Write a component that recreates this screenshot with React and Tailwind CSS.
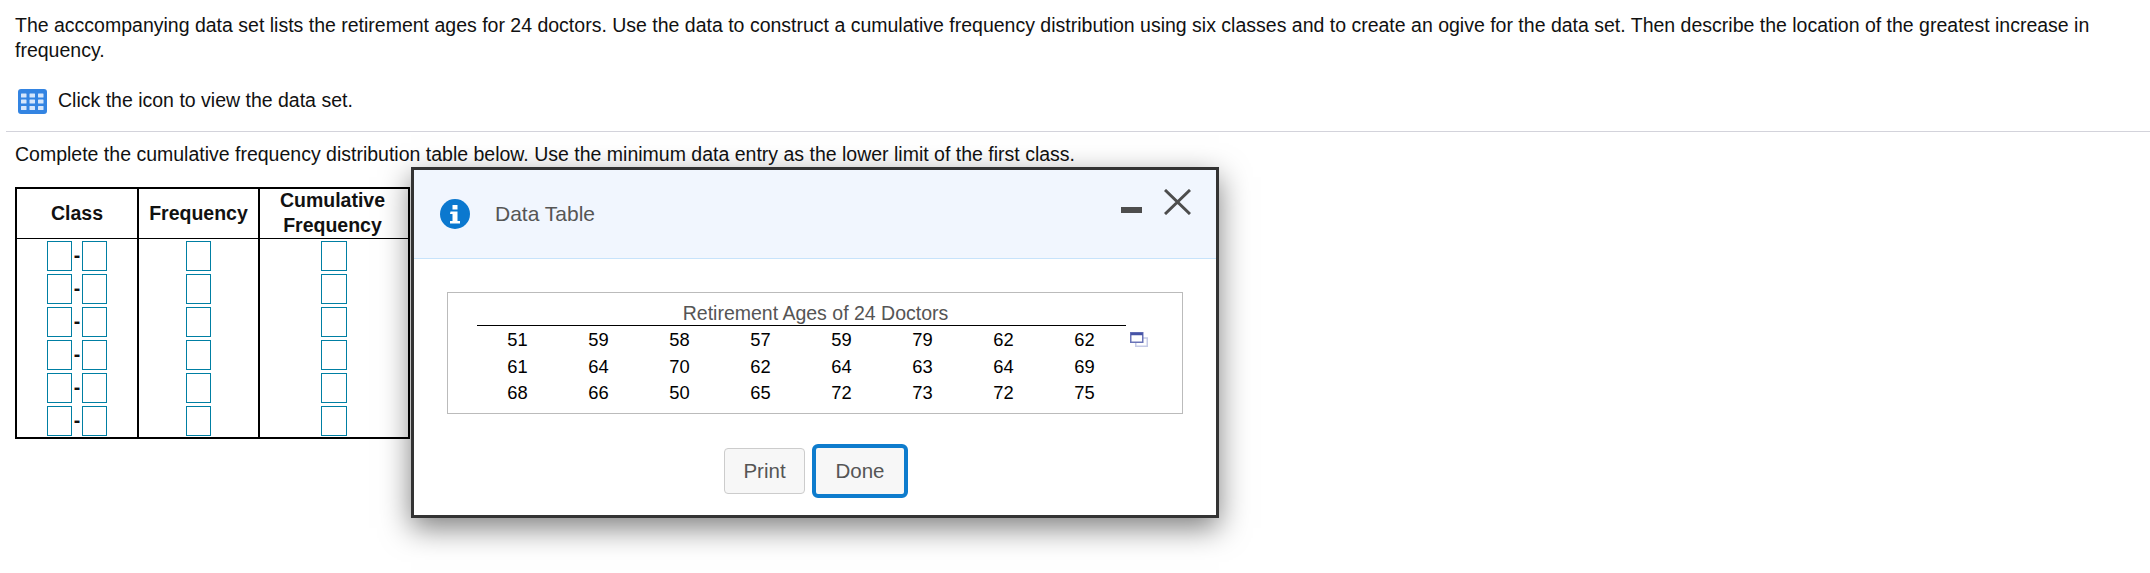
const rows = [
  [51, 59, 58, 57, 59, 79, 62, 62],
  [61, 64, 70, 62, 64, 63, 64, 69],
  [68, 66, 50, 65, 72, 73, 72, 75],
];

function Box({ className = "w-[25px]" }) {
  return <span className={"block h-[30px] border border-[#007fa3] " + className}></span>;
}

function GridIcon() {
  return (
    <svg width="29" height="25" viewBox="0 0 29 25" className="shrink-0">
      <rect width="29" height="25" rx="3" fill="#3384e2" />
      {[4.500, 10.500, 17].map((y) =>
        [3, 11.500, 20].map((x) => <rect key={x + "-" + y} x={x} y={y} width="5.500" height="4" rx="0.500" fill="#d5e6fb" />)
      )}
    </svg>
  );
}

function ClassRow() {
  return (
    <div className="flex h-[33px]">
      <div className="flex w-[120px] justify-center pt-[2px]">
        <div className="flex h-[30px] items-center">
          <Box />
          <span className="w-[10px] text-center font-bold leading-none">-</span>
          <Box />
        </div>
      </div>
      <div className="flex w-[121px] justify-center border-l-2 border-black pt-[2px]">
        <Box />
      </div>
      <div className="flex flex-1 justify-center border-l-2 border-black pt-[2px]">
        <Box className="w-[26px]" />
      </div>
    </div>
  );
}

export default function App() {
  return (
    <div className="relative h-[573px] w-[2150px] overflow-hidden bg-white font-['Liberation_Sans',Arial,sans-serif] text-[19.5px] leading-[24.500px] text-[#111]">
      <div className="pl-[15px] pr-[30px] pt-[13px]">
        <p>
          The acccompanying data set lists the retirement ages for 24 doctors. Use the data to construct a cumulative frequency distribution using six classes and to create an ogive for the data set. Then describe the location of the greatest increase in frequency.
        </p>
        <div className="mt-[27px] flex h-[25px] items-center gap-[11px] pl-[3px]">
          <GridIcon />
          <span className="-mt-[3px]">Click the icon to view the data set.</span>
        </div>
      </div>
      <div className="ml-[6px] mt-[17px] h-px bg-[#d3d3db]"></div>
      <p className="mt-[10px] pl-[15px]">
        Complete the cumulative frequency distribution table below. Use the minimum data entry as the lower limit of the first class.
      </p>

      <div className="ml-[15px] mt-[20px] w-[395px] border-2 border-black font-bold">
        <div className="flex h-[50px] items-center border-b border-black text-center leading-[25px]">
          <div className="w-[120px]">Class</div>
          <div className="flex h-full w-[121px] items-center justify-center border-l-2 border-black">Frequency</div>
          <div className="flex h-full flex-1 items-center justify-center border-l-2 border-black pr-[3px]">
            Cumulative
            <br />
            Frequency
          </div>
        </div>
        {[0, 1, 2, 3, 4, 5].map((i) => (
          <ClassRow key={i} />
        ))}
      </div>

      {/* data table dialog */}
      <div className="absolute left-[411px] top-[167px] flex h-[351px] w-[808px] flex-col border-[3px] border-[#333] bg-white shadow-[0_10px_28px_rgba(0,0,0,0.5)]">
        <div className="flex h-[89px] items-center border-b border-[#c7e3fb] bg-[#f1f6fe] pl-[26px] text-[#555]">
          <svg width="30" height="30" viewBox="0 0 30 30" className="shrink-0">
            <circle cx="15" cy="15" r="15" fill="#0b78cf" />
            <rect x="12.500" y="6" width="5" height="4.500" fill="#fff" />
            <path d="M10.500 12.500h7v9.500h2.500v2.500h-10V22h2.500v-7h-2.500z" fill="#fff" />
          </svg>
          <span className="ml-[25px] text-[21px]">Data Table</span>
          <div className="ml-auto mr-[25px] flex items-center gap-[22px]">
            <span className="mb-[9px] block h-[6px] w-[21px] bg-[#4d4d4d]"></span>
            <svg width="27" height="26" viewBox="0 0 27 26" className="mb-[25px]">
              <path d="M1 1 L26 25 M26 1 L1 25" stroke="#4d4d4d" strokeWidth="3" fill="none" />
            </svg>
          </div>
        </div>

        <div className="mx-[33px] mt-[33px] h-[122px] border border-[#bbb] pl-[29px] pt-[3px]">
          <div className="h-[30px] w-[649px] border-b border-black pl-[28px] text-center leading-[35px] text-[#555]">Retirement Ages of 24 Doctors</div>
          <div className="relative pt-px text-[18.33px] text-black">
            {rows.map((row, i) => (
              <div key={i} className="flex h-[26.500px] items-center">
                {row.map((n, j) => (
                  <span key={j} className="w-[81px] text-center">
                    {n}
                  </span>
                ))}
              </div>
            ))}
            <svg width="18" height="15" viewBox="0 0 18 15" className="absolute left-[653px] top-[6px]">
              <rect x="5.750" y="6" width="11.500" height="8.250" fill="none" stroke="#c5cae6" strokeWidth="1.500" />
              <rect x="0.750" y="0.750" width="12" height="9.500" fill="#fff" stroke="#6a74b8" strokeWidth="1.500" />
              <rect x="0.750" y="0.750" width="12" height="2.500" fill="#4653a6" />
            </svg>
          </div>
        </div>

        <div className="mt-[30px] flex items-center justify-center gap-[7px] pl-[2px] text-[20.500px] text-[#555]">
          <button className="h-[46px] w-[81px] rounded-[4px] border border-[#ccc] bg-[#f7f7f7]">Print</button>
          <button className="h-[54px] w-[96px] rounded-[6px] border-4 border-[#0e7ccd] bg-[#f7f7f7]">Done</button>
        </div>
      </div>
    </div>
  );
}
